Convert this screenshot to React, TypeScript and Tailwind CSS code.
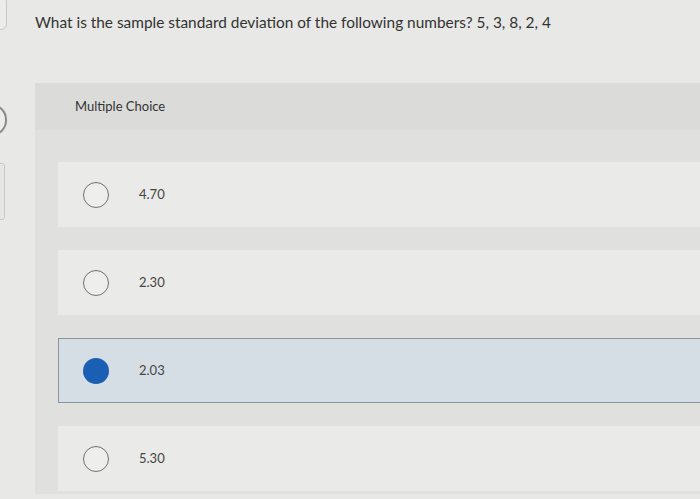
import React from "react";

const options = [
  { label: "4.70", selected: false },
  { label: "2.30", selected: false },
  { label: "2.03", selected: true },
  { label: "5.30", selected: false },
];

export default function App() {
  return (
    <div
      className="w-[700px] h-[499px] overflow-hidden bg-[#e8e8e6] flex text-[#3b3b3b]"
      style={{ fontFamily: "Lato, 'Liberation Sans', Arial, sans-serif" }}
    >
      {/* partially visible left rail */}
      <div className="w-[9px] shrink-0 overflow-hidden flex flex-col">
        <div className="mt-[-4px] ml-[-20px] w-[27px] h-[34px] rounded-[6px] border border-[#c9c9c7] bg-[#ececea]" />
        <div className="mt-[74px] ml-[-24px] w-[31px] h-[32px] rounded-full border-2 border-[#8a8a88] bg-[#ececea]" />
        <div className="mt-[27px] ml-[-20px] w-[25px] h-[57px] rounded-[3px] border border-[#c8c8c6] bg-[#e6e6e4]" />
      </div>

      <div className="flex-1 flex flex-col pl-[26px]">
        <div className="pt-[12px] text-[15.4px] leading-[20px] text-[#333]">
          What is the sample standard deviation of the following numbers? 5, 3, 8, 2, 4
        </div>

        <div className="mt-[51px] flex flex-col">
          <div className="h-[47px] bg-[#dbdbd9] flex items-center pl-[40px] text-[13px] text-[#333]">
            Multiple Choice
          </div>
          <div className="bg-[#e0e0de] pl-[23px] pt-[32px] pb-[3px] flex flex-col gap-[23px]">
            {options.map((o) =>
              o.selected ? (
                <div
                  key={o.label}
                  className="h-[65px] bg-[#d5dee4] border border-[#8a949e] border-r-0 flex items-center pl-[24px]"
                >
                  <div className="w-[26px] h-[26px] rounded-full bg-[#1b5fb5] shrink-0" />
                  <span className="ml-[30px] text-[13px] text-[#444]">{o.label}</span>
                </div>
              ) : (
                <div
                  key={o.label}
                  className="h-[65px] bg-[#eaeae8] flex items-center pl-[25px]"
                >
                  <div className="w-[26px] h-[26px] rounded-full border-[1.5px] border-[#6f6f6f] bg-[#eeeeec] shrink-0" />
                  <span className="ml-[30px] text-[13px] text-[#444]">{o.label}</span>
                </div>
              )
            )}
          </div>
        </div>
      </div>
    </div>
  );
}
